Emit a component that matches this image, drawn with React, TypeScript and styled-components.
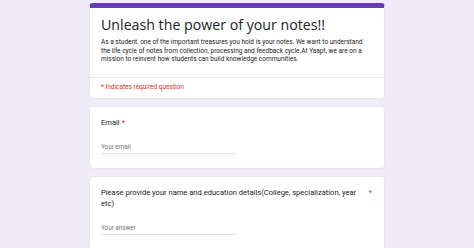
import styled, { createGlobalStyle } from "styled-components";

const GlobalStyle = createGlobalStyle`
    html, body {
        margin: 0;
        padding: 0;
        background: #f0ebf8;
        font-family: Roboto, "Liberation Sans", Arial, sans-serif;
        color: #202124;
    }
`;

const Page = styled.main`
    display: flex;
    flex-direction: column;
    align-items: center;
    gap: 7px;
    padding-top: 3px;
    height: 248px;
    overflow: hidden;
    box-sizing: border-box;
`;

const Card = styled.section`
    width: 296px;
    box-sizing: border-box;
    background: #fff;
    border: 1px solid #e8e5ee;
    border-radius: 4px;
    padding: 10px 11px 14px;
    flex-shrink: 0;
`;

const HeaderCard = styled.section`
    width: 296px;
    box-sizing: border-box;
    background: #fff;
    border: 1px solid #e8e5ee;
    border-top: 5px solid #673ab7;
    border-radius: 4px;
    flex-shrink: 0;
`;

const HeaderBody = styled.div`
    padding: 8px 11px 13px;
    border-bottom: 1px solid #e6e4ea;
`;

const Title = styled.h1`
    margin: 0;
    font-family: "Open Sans", Roboto, sans-serif;
    font-size: 14.2px;
    line-height: 18px;
    font-weight: 400;
    color: #202124;
`;

const Description = styled.p`
    margin: 4px 0 0;
    font-size: 6.5px;
    line-height: 8.7px;
    color: #202124;
`;

const RequiredNote = styled.div`
    padding: 5px 11px 6px;
    font-size: 6.5px;
    line-height: 9px;
    color: #d93025;
`;

const QuestionTitle = styled.div<{ $wide: boolean }>`
    display: flex;
    justify-content: ${(p) => (p.$wide ? "space-between" : "flex-start")};
    gap: ${(p) => (p.$wide ? "4px" : "2px")};
    font-size: 7.55px;
    line-height: 11.5px;
    color: #202124;
    padding-right: ${(p) => (p.$wide ? "1px" : "0")};
`;

const Star = styled.span`
    color: #d93025;
`;

const Answer = styled.div`
    margin-top: 14px;
    width: 135px;
    padding-bottom: 1px;
    border-bottom: 1px solid #e0e0e0;
    font-size: 6.3px;
    line-height: 9px;
    color: #70757a;
`;

const questions = [
    { label: "Email", placeholder: "Your email", wide: false },
    {
        label: "Please provide your name and education details(College, specialization, year etc)",
        placeholder: "Your answer",
        wide: true,
    },
];

function App() {
    return (
        <>
            <GlobalStyle />
            <Page>
                <HeaderCard>
                    <HeaderBody>
                        <Title>Unleash the power of your notes!!</Title>
                        <Description>
                            As a student, one of the important treasures you hold is your notes. We want to understand
                            the life cycle of notes from collection, processing and feedback cycle.At Yaapt, we are on a
                            mission to reinvent how students can build knowledge communities.
                        </Description>
                    </HeaderBody>
                    <RequiredNote>* Indicates required question</RequiredNote>
                </HeaderCard>
                {questions.map((q) => (
                    <Card key={q.label}>
                        <QuestionTitle $wide={q.wide}>
                            <span>{q.label}</span>
                            <Star>*</Star>
                        </QuestionTitle>
                        <Answer>{q.placeholder}</Answer>
                    </Card>
                ))}
            </Page>
        </>
    );
}

export default App;
